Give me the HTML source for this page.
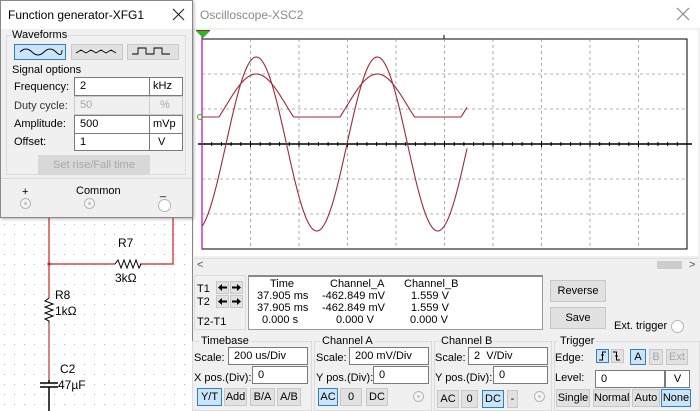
<!DOCTYPE html>
<html><head><meta charset="utf-8">
<style>
*{box-sizing:border-box;margin:0;padding:0}
body{width:700px;height:411px;position:relative;overflow:hidden;background:#fff;font-family:"Liberation Sans",sans-serif;font-size:11px;color:#000}
.a{position:absolute}
.t{position:absolute;white-space:nowrap;line-height:12px}
.inp{position:absolute;background:#fff;border:1px solid #7a7a7a;padding-left:5px;line-height:16px;white-space:nowrap}
.btn{position:absolute;background:#e1e1e1;border:1px solid #c8c8c8;text-align:center;line-height:16px;white-space:nowrap}
.sel{background:#cce4f7;border:1px solid #2f7fc8}
.dis{color:#a8a8a8}
.grp{position:absolute;border:1px solid #dcdcdc}
.rad{position:absolute;width:11px;height:11px;border:1px solid #b5b5b5;border-radius:50%;background:#f4f4f4}
.rad.d::after{content:"";position:absolute;left:3px;top:3px;width:3px;height:3px;border-radius:50%;background:#c8c8c8}
</style></head><body>
<svg class="a" style="left:0;top:0" width="700" height="411">
<defs><pattern id="dots" width="10" height="10" patternUnits="userSpaceOnUse"><rect x="4" y="4" width="1" height="1" fill="#b8b8b8"/></pattern></defs>
<rect x="0" y="200" width="192" height="211" fill="url(#dots)"/>
<g stroke="#d02020" stroke-width="1.2" fill="none">
<path d="M49 217V298M49 264H115M140 264H173V217"/>
<path d="M49 323V380" stroke="#c03030"/>
</g>
<circle cx="49" cy="264" r="1.6" fill="#d02020"/>
<g stroke="#000" stroke-width="1" fill="none">
<path d="M115 264l3-4 3 8 3-8 3 8 3-8 3 8 3-8 3 8 2-4"/>
<path d="M49 298l-4 3 8 3-8 3 8 3-8 3 8 3-8 3 4 2v2"/>
<path d="M49 380V383M40 383H58M40 387H58M49 387V411" stroke-width="1.5"/>
</g>
<text x="118" y="247" font-size="12" font-family="Liberation Sans">R7</text>
<text x="115" y="282" font-size="12" font-family="Liberation Sans">3kΩ</text>
<text x="55" y="299" font-size="12" font-family="Liberation Sans">R8</text>
<text x="55" y="315" font-size="12" font-family="Liberation Sans">1kΩ</text>
<text x="60" y="373" font-size="12" font-family="Liberation Sans">C2</text>
<text x="58" y="389" font-size="12" font-family="Liberation Sans">47µF</text>
</svg>

<div class="a" style="left:192px;top:0;width:508px;height:411px;background:#f0f0f0;border-left:1px solid #888"></div>
<div class="a" style="left:193px;top:0;width:507px;height:28px;background:#fff"></div>
<div class="t" style="left:200px;top:9px;font-size:12px;color:#8a8a8a">Oscilloscope-XSC2</div>
<svg class="a" style="left:676px;top:7px" width="14" height="14"><path d="M1 1L13 13M13 1L1 13" stroke="#888" stroke-width="1.2"/></svg>
<svg class="a" style="left:194px;top:30px" width="504" height="226">
<rect x="0" y="0" width="504" height="226" fill="#fff"/>
<rect x="8" y="9" width="485" height="210" fill="#fff" stroke="#000" stroke-width="1"/>
<g stroke="#9a9a9a" stroke-width="0.8" stroke-dasharray="3,3" id="grid"></g>
<line x1="4" y1="114" x2="498" y2="114" stroke="#000" stroke-width="1.5"/>
<g id="ticks" stroke="#000" stroke-width="1"></g>
<line x1="8" y1="4" x2="8" y2="219" stroke="#c000c0" stroke-width="1.2"/>
<path d="M2 1H16L9 8Z" fill="#2bb52b"/><path d="M2 0H16" stroke="#8a3020" stroke-width="2"/>
<circle cx="6" cy="87" r="2.5" fill="none" stroke="#2bb52b"/>
<path id="wa" fill="none" stroke="#a02a35" stroke-width="1.1"/>
<path id="wb" fill="none" stroke="#a02a35" stroke-width="1.1"/>
</svg>
<script>
(function(){
var g=document.getElementById('grid'),s='',i;
for(i=1;i<10;i++){var x=8+i*48.5;s+='<line x1="'+x+'" y1="9" x2="'+x+'" y2="219"/>';}
for(i=1;i<6;i++){var y=9+i*35;if(i!=3)s+='<line x1="8" y1="'+y+'" x2="493" y2="'+y+'"/>';}
g.innerHTML=s;
var t='';for(i=0;i<=50;i++){var x=8+i*9.7;var h=(i%5==0)?3:2;t+='<line x1="'+x+'" y1="'+(114-h)+'" x2="'+x+'" y2="'+(114+h)+'"/>';}
t+='<line x1="250" y1="9" x2="250" y2="5"/>';
document.getElementById('ticks').innerHTML=t;
var a='',b='';
for(var X=202;X<=467;X++){var p=2*Math.PI*(X-226)/121;
var ya=144-87*Math.sin(p);var yb=Math.min(117,105.7-31.7*Math.sin(p));
a+=(X==202?'M':'L')+(X-194)+' '+(ya-30).toFixed(1);b+=(X==202?'M':'L')+(X-194)+' '+(yb-30).toFixed(1);}
document.getElementById('wa').setAttribute('d',a);document.getElementById('wb').setAttribute('d',b);
})();
</script>
<div class="a" style="left:194px;top:258px;width:504px;height:13px;background:#f0f0f0;border-top:1px solid #ddd"></div>
<div class="t" style="left:197px;top:259px;color:#555">&lt;</div>
<div class="t" style="left:689px;top:259px;color:#555">&gt;</div>
<div class="a" style="left:657px;top:261px;width:25px;height:8px;background:#cdcdcd"></div>

<div class="grp" style="left:194px;top:275px;width:52px;height:55px"></div>
<div class="t" style="left:197px;top:283px">T1</div>
<div class="t" style="left:197px;top:296px">T2</div>
<div class="t" style="left:197px;top:316px">T2-T1</div>
<div class="btn" style="left:216px;top:281px;width:13px;height:13px"></div>
<div class="btn" style="left:230px;top:281px;width:13px;height:13px"></div>
<div class="btn" style="left:216px;top:295px;width:13px;height:13px"></div>
<div class="btn" style="left:230px;top:295px;width:13px;height:13px"></div>
<svg class="a" style="left:216px;top:281px" width="28" height="28"><g fill="#000">
<path d="M2 6.5L6 3V5.5H11V7.5H6V10Z"/><path d="M25 6.5L21 3V5.5H16V7.5H21V10Z"/>
<path d="M2 20.5L6 17V19.5H11V21.5H6V24Z"/><path d="M25 20.5L21 17V19.5H16V21.5H21V24Z"/></g></svg>
<div class="a" style="left:248px;top:275px;width:295px;height:55px;background:#fff;border:1px solid #999;border-top:2px solid #888"></div>
<div class="t" style="left:270px;top:278px">Time</div>
<div class="t" style="left:330px;top:278px">Channel_A</div>
<div class="t" style="left:404px;top:278px">Channel_B</div>
<div class="t" style="left:257px;top:290px">37.905 ms</div>
<div class="t" style="left:322px;top:290px">-462.849 mV</div>
<div class="t" style="left:411px;top:290px">1.559 V</div>
<div class="t" style="left:257px;top:302px">37.905 ms</div>
<div class="t" style="left:322px;top:302px">-462.849 mV</div>
<div class="t" style="left:411px;top:302px">1.559 V</div>
<div class="t" style="left:262px;top:314px">0.000 s</div>
<div class="t" style="left:336px;top:314px">0.000 V</div>
<div class="t" style="left:410px;top:314px">0.000 V</div>
<div class="btn" style="left:550px;top:280px;width:56px;height:22px;line-height:20px">Reverse</div>
<div class="btn" style="left:550px;top:307px;width:56px;height:22px;line-height:20px">Save</div>
<div class="t" style="left:614px;top:320px">Ext. trigger</div>
<div class="rad" style="left:671px;top:320px;width:13px;height:13px;background:#fff"></div>

<div class="grp" style="left:192px;top:341px;width:120px;height:70px"></div>
<div class="t" style="left:199px;top:335px;background:#f0f0f0;padding:0 2px">Timebase</div>
<div class="t" style="left:194px;top:352px">Scale:</div>
<div class="inp" style="left:228px;top:347px;width:80px;height:18px">200 us/Div</div>
<div class="t" style="left:194px;top:372px">X pos.(Div):</div>
<div class="inp" style="left:252px;top:366px;width:56px;height:18px">0</div>
<div class="btn sel" style="left:197px;top:388px;width:25px;height:18px">Y/T</div>
<div class="btn" style="left:224px;top:388px;width:23px;height:18px">Add</div>
<div class="btn" style="left:250px;top:388px;width:25px;height:18px">B/A</div>
<div class="btn" style="left:277px;top:388px;width:24px;height:18px">A/B</div>
<div class="grp" style="left:314px;top:341px;width:118px;height:70px"></div>
<div class="t" style="left:320px;top:335px;background:#f0f0f0;padding:0 2px">Channel A</div>
<div class="t" style="left:316px;top:352px">Scale:</div>
<div class="inp" style="left:349px;top:347px;width:80px;height:18px">200 mV/Div</div>
<div class="t" style="left:316px;top:372px">Y pos.(Div):</div>
<div class="inp" style="left:373px;top:366px;width:56px;height:18px">0</div>
<div class="btn sel" style="left:318px;top:388px;width:20px;height:18px">AC</div>
<div class="btn" style="left:340px;top:388px;width:22px;height:18px">0</div>
<div class="btn" style="left:366px;top:388px;width:22px;height:18px">DC</div>
<div class="rad d" style="left:413px;top:391px"></div>
<div class="grp" style="left:434px;top:341px;width:118px;height:70px"></div>
<div class="t" style="left:439px;top:335px;background:#f0f0f0;padding:0 2px">Channel B</div>
<div class="t" style="left:435px;top:352px">Scale:</div>
<div class="inp" style="left:468px;top:347px;width:80px;height:18px">2&nbsp; V/Div</div>
<div class="t" style="left:435px;top:372px">Y pos.(Div):</div>
<div class="inp" style="left:493px;top:366px;width:55px;height:18px">0</div>
<div class="btn" style="left:437px;top:390px;width:22px;height:18px">AC</div>
<div class="btn" style="left:461px;top:390px;width:17px;height:18px">0</div>
<div class="btn sel" style="left:482px;top:390px;width:22px;height:18px">DC</div>
<div class="btn" style="left:507px;top:390px;width:11px;height:18px">-</div>
<div class="rad d" style="left:534px;top:391px"></div>
<div class="grp" style="left:554px;top:341px;width:146px;height:70px"></div>
<div class="t" style="left:558px;top:335px;background:#f0f0f0;padding:0 2px">Trigger</div>
<div class="t" style="left:555px;top:352px">Edge:</div>
<div class="btn sel" style="left:596px;top:349px;width:13px;height:14px"></div>
<div class="btn" style="left:611px;top:349px;width:13px;height:14px"></div>
<svg class="a" style="left:596px;top:349px" width="30" height="14"><g fill="none" stroke="#000" stroke-width="1">
<path d="M3 11H6.5V3H10M5 6H8"/><path d="M17 3H20.5V11H24M19 7H22"/></g></svg>
<div class="btn sel" style="left:630px;top:349px;width:16px;height:16px;line-height:14px">A</div>
<div class="btn dis" style="left:649px;top:349px;width:14px;height:16px;line-height:14px">B</div>
<div class="btn dis" style="left:666px;top:349px;width:22px;height:16px;line-height:14px">Ext</div>
<div class="t" style="left:555px;top:372px">Level:</div>
<div class="inp" style="left:595px;top:370px;width:70px;height:18px">0</div>
<div class="inp" style="left:665px;top:370px;width:25px;height:18px;text-align:center;padding:0">V</div>
<div class="btn" style="left:556px;top:389px;width:34px;height:18px">Single</div>
<div class="btn" style="left:593px;top:389px;width:37px;height:18px">Normal</div>
<div class="btn" style="left:632px;top:389px;width:28px;height:18px">Auto</div>
<div class="btn sel" style="left:661px;top:389px;width:30px;height:18px">None</div>

<div class="a" style="left:0;top:0;width:193px;height:218px;background:#f0f0f0;border:1px solid #888;box-shadow:1px 1px 3px rgba(0,0,0,.3)"></div>
<div class="a" style="left:1px;top:1px;width:191px;height:28px;background:#fff"></div>
<div class="t" style="left:8px;top:9px;font-size:12px">Function generator-XFG1</div>
<svg class="a" style="left:172px;top:8px" width="13" height="13"><path d="M1 1L12 12M12 1L1 12" stroke="#222" stroke-width="1.1"/></svg>
<div class="grp" style="left:6px;top:35px;width:180px;height:140px"></div>
<div class="t" style="left:11px;top:29px;background:#f0f0f0;padding:0 1px">Waveforms</div>
<div class="btn sel" style="left:14px;top:44px;width:52px;height:16px"></div>
<div class="btn" style="left:71px;top:44px;width:52px;height:16px"></div>
<div class="btn" style="left:127px;top:44px;width:52px;height:16px"></div>
<svg class="a" style="left:0;top:0" width="192" height="70"><g fill="none" stroke="#000" stroke-width="0.9">
<path d="M20 52q6-6 12 0t12 0t12 0t6-2"/>
<path d="M76 53l5-3 5 3 5-3 5 3 5-3 5 3 5-3 5 3"/>
<path d="M132 54h6v-6h8v6h8v-6h8v6h8"/></g></svg>
<div class="t" style="left:11px;top:64px;background:#f0f0f0;padding:0 1px">Signal options</div>
<div class="t" style="left:14px;top:81px">Frequency:</div>
<div class="inp" style="left:74px;top:77px;width:76px;height:19px">2</div>
<div class="inp" style="left:149px;top:77px;width:34px;height:19px;padding-left:3px">kHz</div>
<div class="t" style="left:14px;top:100px;color:#333">Duty cycle:</div>
<div class="inp dis" style="left:74px;top:96px;width:76px;height:19px;background:#f0f0f0;border-color:#ccc">50</div>
<div class="inp dis" style="left:149px;top:96px;width:34px;height:19px;background:#f0f0f0;border-color:#ccc;padding-left:10px">%</div>
<div class="t" style="left:14px;top:118px">Amplitude:</div>
<div class="inp" style="left:74px;top:115px;width:76px;height:19px">500</div>
<div class="inp" style="left:149px;top:115px;width:34px;height:19px;padding-left:3px">mVp</div>
<div class="t" style="left:14px;top:136px">Offset:</div>
<div class="inp" style="left:74px;top:133px;width:76px;height:18px">1</div>
<div class="inp" style="left:149px;top:133px;width:34px;height:18px;padding-left:8px">V</div>
<div class="btn dis" style="left:38px;top:155px;width:112px;height:20px;line-height:18px;background:#d8d8d8;border-color:#d8d8d8">Set rise/Fall time</div>
<div class="a" style="left:1px;top:178px;width:191px;height:1px;background:#dcdcdc"></div>
<div class="t" style="left:22px;top:186px">+</div>
<div class="t" style="left:76px;top:185px">Common</div>
<div class="t" style="left:160px;top:186px">_</div>
<div class="rad d" style="left:20px;top:198px"></div>
<div class="rad d" style="left:84px;top:198px"></div>
<div class="rad" style="left:158px;top:199px;width:13px;height:13px;background:#fff"></div>
</body></html>
